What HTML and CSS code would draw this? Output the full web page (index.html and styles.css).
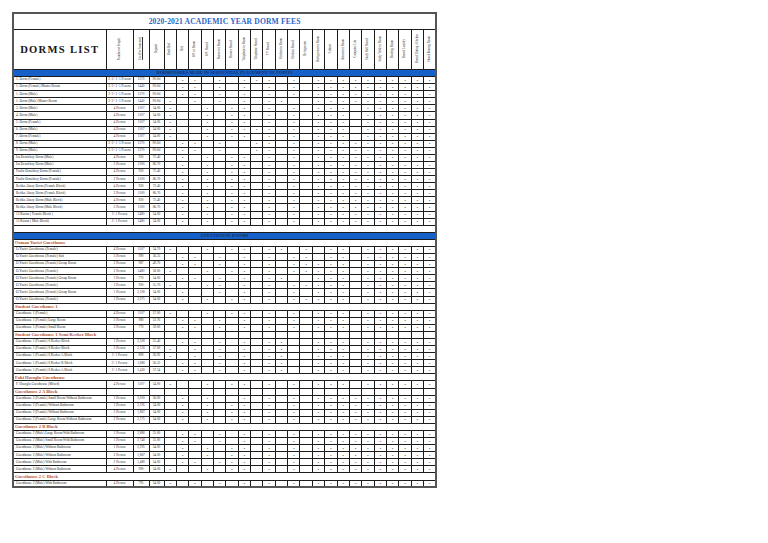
FILE: index.html
```html
<!DOCTYPE html>
<html lang="en">
<head>
<meta charset="utf-8">
<title>2020-2021 Academic Year Dorm Fees</title>
<link rel="stylesheet" href="styles.css">
</head>
<body>
<table class="sheet">
  <colgroup>
    <col class="c-name"><col class="c-num"><col class="c-fee"><col class="c-dep">
    <col class="c-f"><col class="c-f"><col class="c-f"><col class="c-f"><col class="c-f"><col class="c-f"><col class="c-f"><col class="c-f"><col class="c-f"><col class="c-f"><col class="c-f">
    <col class="c-f"><col class="c-f"><col class="c-f"><col class="c-f"><col class="c-f"><col class="c-f"><col class="c-f"><col class="c-f"><col class="c-f"><col class="c-f"><col class="c-f">
  </colgroup>
  <thead>
    <tr class="title"><td colspan="26">2020-2021 ACADEMIC YEAR DORM FEES</td></tr>
    <tr class="head" id="head">
      <th class="list">DORMS LIST</th>
    </tr>
  </thead>
  <tbody id="rows"></tbody>
</table>
<script src="script.js"></script>
</body>
</html>
```

FILE: styles.css
```css
html, body { background: #fff; }
body {
  margin: 12px;
  font-family: "Liberation Serif", "Times New Roman", serif;
}
.sheet {
  border-collapse: collapse;
  table-layout: fixed;
  width: 423px;
  border: 2px solid #555;
}
.c-name { width: 93px; }
.c-num { width: 27px; }
.c-fee { width: 16px; }
.c-dep { width: 15px; }
.c-f { width: 12.36px; }

.sheet td, .sheet th {
  border: 1px solid #1c1c1c;
  padding: 0;
  font-size: 3.4px;
  line-height: 3.4px;
  color: #333;
  font-weight: normal;
  white-space: nowrap;
  overflow: hidden;
  text-align: center;
  vertical-align: middle;
}
.sheet tbody tr { height: 7.08px; }

.title td {
  height: 15px;
  font-size: 7.6px;
  line-height: 8px;
  font-weight: bold;
  color: #2c66c6;
  letter-spacing: 0.15px;
}
.head { height: 40px; }
.head th.list {
  font-size: 10.6px;
  line-height: 12px;
  font-weight: bold;
  color: #151515;
  letter-spacing: 1.3px;
}
.vt {
  display: inline-block;
  writing-mode: vertical-rl;
  transform: rotate(180deg);
  font-size: 3px;
  line-height: 3.4px;
  color: #333;
}
.vt.ul { text-decoration: underline; }

.band td {
  background: #1561c9;
  color: #1a2a55;
  font-weight: bold;
  font-size: 4px;
  letter-spacing: 0.25px;
  border-left-color: #1561c9;
  border-right-color: #1561c9;
}
.blank td {
  border-left: none;
  border-right: none;
  border-top-color: #888;
}
td.name {
  text-align: left;
  padding-left: 2px;
  color: #2a2a2a;
}
td.num { color: #333; }
td.m {
  font-size: 5px;
  line-height: 5px;
  color: #666;
}
.sub td.name {
  font-size: 4.6px;
  font-weight: bold;
  color: #b5502c;
  padding-left: 1px;
}
```

FILE: script.js
```js
var HEAD = ["Number of People", "Fee (Per Semester)", "Deposit",
  "Bunk Bed", "Bed", "WC in Room", "WC Shared", "Shower in Room", "Shower Shared",
  "Telephone in Room", "Telephone Shared", "TV Shared", "Kitchen in Room", "Kitchen Shared",
  "Refrigerator", "Refrigerator in Room", "Cabinet", "Internet in Room", "Computer Lab",
  "Study Hall Shared", "Study Table in Room", "Reading Room", "Shared Laundry",
  "Shared Dining / Kitchen", "Shared Ironing Room"];

var A = ".x.x.xx.x.x.xxxxxxxxxx";
var ROWS = [
  ["band", "DORMITORIES MADE IN SEQUENTIAL PLACEMENT OF POINTS"],
  ["d", "1. Dorm (Female)", "2+2+1+1 Person", "1370", "90.0tl", ".xx.x.xxx.x.xxxxxxxxxx"],
  ["d", "1. Dorm (Female) Master Room", "2+2+1+1 Person", "1440", "90.0tl", ".xx.x.x.x.x.xxxxxxxxxx"],
  ["d", "1. Dorm (Male)", "2+2+1+1 Person", "1370", "90.0tl", ".xx.x.x.x.x.xxxxxxxxxx"],
  ["d", "1. Dorm (Male) Master Room", "2+2+1+1 Person", "1440", "90.0tl", "x.x.x.x.xx..xxxxxxxxxx"],
  ["d", "3. Dorm (Male)", "4 Person", "1107", "54.00", "x..x.xx.x.x.xxx.xxxxxx"],
  ["d", "4. Dorm (Male)", "4 Person", "1107", "54.00", "x..x.xx.x.x.xxx.xxxxxx"],
  ["d", "5. Dorm (Female)", "4 Person", "1107", "54.00", "x..x.xx.x.x.xxx.xxxxxx"],
  ["d", "6. Dorm (Male)", "4 Person", "1107", "54.00", "x..x.xxxx.x.xxx.xxxxxx"],
  ["d", "7. Dorm (Female)", "4 Person", "1107", "54.00", "x..x.xx.x.x.xxx.xxxxxx"],
  ["d", "8. Dorm (Male)", "2+2+1+1 Person", "1370", "90.0tl", ".xx.x..xx.x.xxxxxxxxxx"],
  ["d", "9. Dorm (Male)", "2+2+1+1 Person", "1370", "90.0tl", ".xx.x..xx.x.xxxxxxxxxx"],
  ["d", "Isa Demirkoy Dorm (Male)", "4 Person", "930", "72.40", A],
  ["d", "Isa Demirkoy Dorm (Male)", "2 Person", "1100", "86.70", A],
  ["d", "Fazlia Demirkoy Dorm (Female)", "4 Person", "930", "72.40", A],
  ["d", "Fazlia Demirkoy Dorm (Female)", "2 Person", "1100", "86.70", A],
  ["d", "Refika Aksoy Dorm (Female Block)", "4 Person", "930", "72.40", A],
  ["d", "Refika Aksoy Dorm (Female Block)", "2 Person", "1100", "86.70", A],
  ["d", "Refika Aksoy Dorm (Male Block)", "4 Person", "930", "72.40", A],
  ["d", "Refika Aksoy Dorm (Male Block)", "2 Person", "1100", "86.70", A],
  ["d", "15 Kasim ( Female Block )", "2+1 Person", "1480", "54.00", A],
  ["d", "15 Kasim ( Male Block)", "2+1 Person", "1480", "54.00", A],
  ["blank"],
  ["band", "GUESTHOUSE ROOMS"],
  ["sub", "Osman Yazici Guesthouse"],
  ["d", "O.Yazici Guesthouse (Female)", "4 Person", "1107", "54.70", "x..x.xx.xx.x.xx.xxxxxx"],
  ["d", "O.Yazici Guesthouse (Female) Suit", "3 Person", "990", "36.35", ".xx.x.x.x.xx.xx.xxxxxx"],
  ["d", "O.Yazici Guesthouse (Female) Group Room", "2 Person", "987", "49.70", ".xx.x.x.x.xxxxx.xxxxxx"],
  ["d", "O.Yazici Guesthouse (Female)", "2 Person", "1480", "58.00", "x..x.xx.x.xxxxx.xxxxxx"],
  ["d", "O.Yazici Guesthouse (Female) Group Room", "3 Person", "770", "54.00", ".xx.x.x.xx..xxx.xxxxxx"],
  ["d", "O.Yazici Guesthouse (Female)", "3 Person", "930", "55.70", "x..xx.x.x.xxxxx.xxxxxx"],
  ["d", "O.Yazici Guesthouse (Female) Group Room", "1 Person", "2,100", "54.00", ".x..x.x.x.x.xxx.xxxxxx"],
  ["d", "O.Yazici Guesthouse (Female)", "1 Person", "2,075", "54.00", ".x.x.xx.x.xxxxx.xxxxxx"],
  ["sub", "Student Guesthouse 1"],
  ["d", "Guesthouse 1 (Female)", "4 Person", "1107", "57.00", "x..x.xx.x.x.xxx.xxxxxx"],
  ["d", "Guesthouse 1 (Female) Large Room", "2 Person", "980", "53.76", ".xx.x.x.x.x.xxx.xxxxxx"],
  ["d", "Guesthouse 1 (Female) Small Room", "2 Person", "770", "59.00", ".xx.x.x.x.x.xxx.xxxxxx"],
  ["subg", "Student Guesthouse 1 Semi Kerker Block"],
  ["d", "Guesthouse 1 (Female) S.Kerker Block", "1 Person", "2,520", "55.40", ".xx.x.x.xx..xxx.xxxxxx"],
  ["d", "Guesthouse 1 (Female) S.Kerker Block", "2 Person", "2,120", "57.00", "x.x.x.x.xx..xxx.xxxxxx"],
  ["d", "Guesthouse 1 (Female) S.Kerker A Block", "2+1 Person", "890", "26.92", "x.x.x.x.xx..xxx.xxxxxx"],
  ["d", "Guesthouse 1 (Female) S.Kerker B Block", "2+1 Person", "1,680", "56.33", ".xx.x.x.xx..xxx.xxxxxx"],
  ["d", "Guesthouse 1 (Female) S.Kerker A Block", "2+1 Person", "1,430", "57.34", ".xx.x.x.xx..xxx.xxxxxx"],
  ["sub", "Fahi Hasoglu Guesthouse"],
  ["d", "F. Hasoglu Guesthouse (Mixed)", "4 Person", "1107", "54.00", "x..x.xx.x.x.xxx.xxxxxx"],
  ["subg", "Guesthouse 2 A Block"],
  ["d", "Guesthouse 2 (Female) Small Room Without Bathroom", "1 Person", "3,050", "36.00", ".x.x..x.x.x.xxxxxxxxxx"],
  ["d", "Guesthouse 2 (Female) Without Bathroom", "1 Person", "2,195", "54.00", A],
  ["d", "Guesthouse 2 (Female) Without Bathroom", "2 Person", "1,867", "54.00", A],
  ["d", "Guesthouse 2 (Female) Large Room Without Bathroom", "2 Person", "2,175", "54.00", A],
  ["sub", "Guesthouse 2 B Block"],
  ["d", "Guesthouse 2 (Male) Large Room With Bathroom", "1 Person", "2,880", "25.00", ".xx.x.x.x.x.xxxxxxxxxx"],
  ["d", "Guesthouse 2 (Male) Small Room With Bathroom", "1 Person", "2,740", "35.00", ".xx.x.x.x.x.xxxxxxxxxx"],
  ["d", "Guesthouse 2 (Male) Without Bathroom", "1 Person", "2,295", "54.00", A],
  ["d", "Guesthouse 2 (Male) Without Bathroom", "2 Person", "1,867", "54.00", A],
  ["d", "Guesthouse 2 (Male) With Bathroom", "2 Person", "1,480", "54.00", ".xx.xxx.x.x.xxxxxxxxxx"],
  ["d", "Guesthouse 2 (Male) Without Bathroom", "4 Person", "990", "54.00", "x..x.xx.x.x.xxxxxxxxxx"],
  ["sub", "Guesthouse 2 C Block"],
  ["d", "Guesthouse 2 (Male) With Bathroom", "4 Person", "795", "54.00", "x.x.x.x.x.x.xxxxxxxxxx"]
];

(function () {
  var head = document.getElementById("head");
  HEAD.forEach(function (label, i) {
    var th = document.createElement("th");
    var s = document.createElement("span");
    s.className = i === 1 ? "vt ul" : "vt";
    s.textContent = label;
    th.appendChild(s);
    head.appendChild(th);
  });

  var tb = document.getElementById("rows");
  function cell(tr, cls, txt, span) {
    var td = document.createElement("td");
    if (cls) td.className = cls;
    if (txt) td.textContent = txt;
    if (span) td.colSpan = span;
    tr.appendChild(td);
    return td;
  }
  ROWS.forEach(function (r) {
    var tr = document.createElement("tr");
    var t = r[0];
    if (t === "band") { tr.className = "band"; cell(tr, "", r[1], 26); }
    else if (t === "blank") { tr.className = "blank"; cell(tr, "", "", 26); }
    else if (t === "sub") { tr.className = "sub"; cell(tr, "name", r[1], 26); }
    else if (t === "subg") {
      tr.className = "sub";
      cell(tr, "name", r[1]);
      for (var i = 0; i < 25; i++) cell(tr, "", "");
    } else {
      cell(tr, "name", r[1]);
      cell(tr, "num", r[2]);
      cell(tr, "num", r[3]);
      cell(tr, "num", r[4]);
      r[5].split("").forEach(function (c) { cell(tr, "m", c === "x" ? "\u2022" : ""); });
    }
    tb.appendChild(tr);
  });
})();
```
